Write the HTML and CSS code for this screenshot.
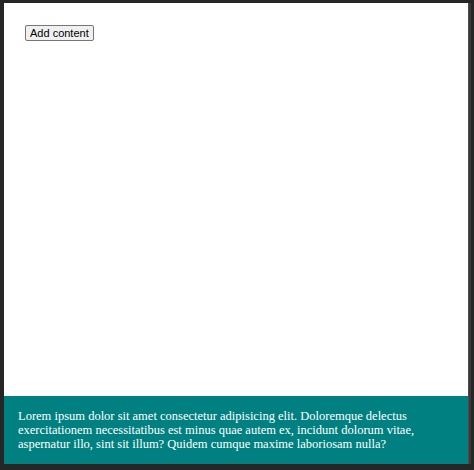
FILE: index.html
```html
<!DOCTYPE html>
<html>
<head>
<meta charset="utf-8">
<link rel="stylesheet" href="styles.css">
</head>
<body>
<div class="frame">
  <main class="content">
    <button class="add-btn">Add content</button>
  </main>
  <footer class="footer">
    <p>Lorem ipsum dolor sit amet consectetur adipisicing elit. Doloremque delectus exercitationem necessitatibus est minus quae autem ex, incidunt dolorum vitae, aspernatur illo, sint sit illum? Quidem cumque maxime laboriosam nulla?</p>
  </footer>
</div>
</body>
</html>
```
FILE: styles.css
```css
html, body {
  margin: 0;
  height: 100%;
}
body {
  background: #262626;
  box-sizing: border-box;
  padding: 3px 6px 6px 4px;
  display: flex;
}
.frame {
  flex: 1;
  display: flex;
  flex-direction: column;
  background: #fff;
  box-shadow: 1px 0 0 #4a4a4a, 3px 0 0 #3a3a3a;
}
.content {
  flex: 1;
  padding: 22px 21px;
}
.add-btn {
  display: block;
  font-family: "Liberation Sans", Arial, sans-serif;
  font-size: 11px;
  height: 16px;
  padding: 0 4px;
  line-height: 12px;
  background: #f0f0f0;
  border: 1px solid #767676;
  border-radius: 2px;
  color: #000;
}
.footer {
  height: 68px;
  box-sizing: border-box;
  background: #008080;
  color: #fff;
  padding: 13px 14px 0;
}
.footer p {
  margin: 0;
  font-family: "Liberation Serif", "Times New Roman", serif;
  font-size: 12.5px;
  line-height: 14.2px;
}
```
